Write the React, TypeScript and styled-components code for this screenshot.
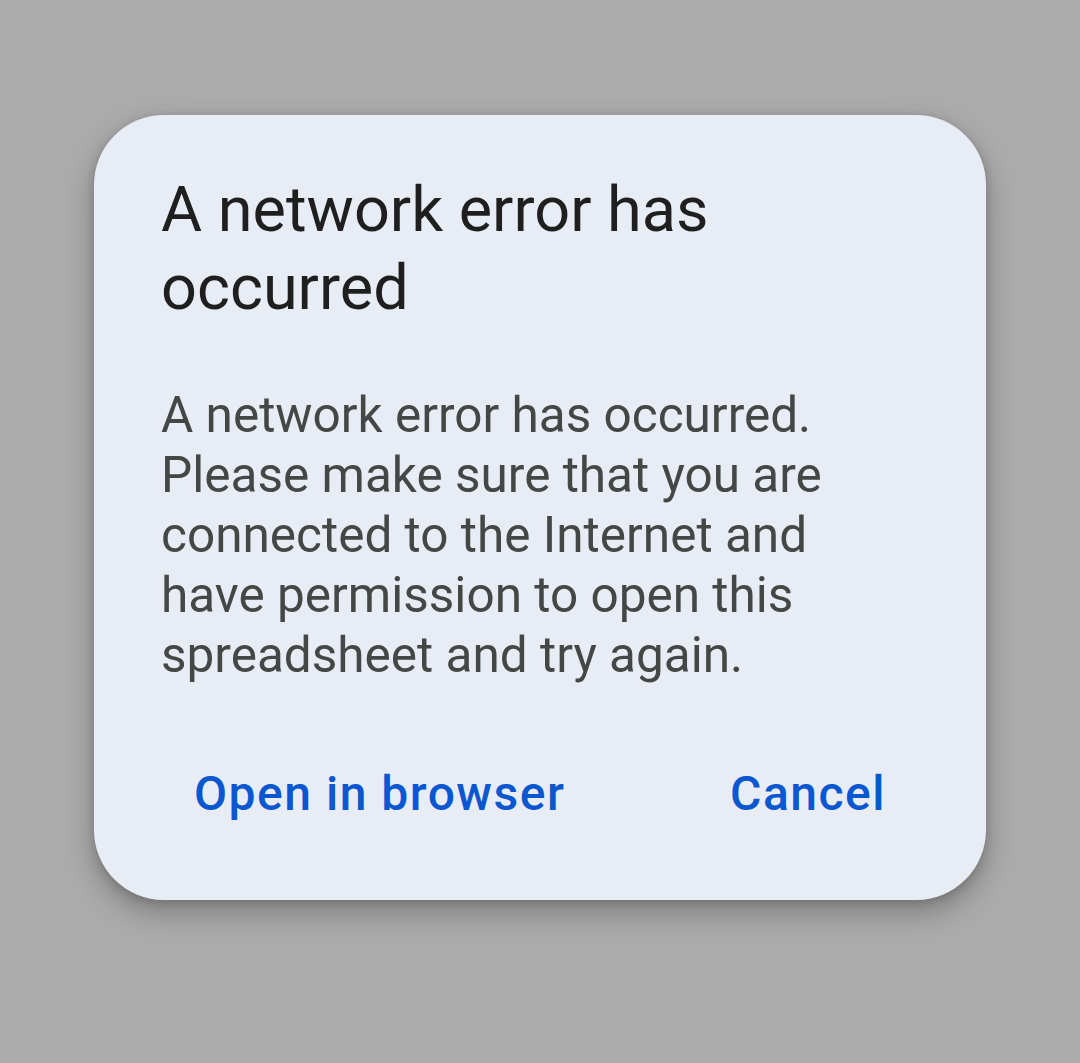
import React from "react";
import styled, { createGlobalStyle } from "styled-components";

const Global = createGlobalStyle`
  html, body { margin: 0; padding: 0; background: #ababab; }
  body { font-family: "Roboto", "Open Sans", sans-serif; }
`;

const Screen = styled.div`
  width: 1080px;
  height: 1063px;
  background: #ababab;
  display: flex;
  align-items: flex-start;
  justify-content: center;
  padding-top: 115px;
  box-sizing: border-box;
`;

const Dialog = styled.div`
  width: 892px;
  height: 785px;
  box-sizing: border-box;
  background: #e8edf5;
  border-radius: 70px;
  box-shadow: 0 12px 28px rgba(0, 0, 0, 0.28), 0 2px 8px rgba(0, 0, 0, 0.15);
  padding: 56px 64px 0 67px;
  display: flex;
  flex-direction: column;
`;

const Title = styled.h1`
  margin: 0;
  font-family: "Roboto", sans-serif;
  font-weight: 400;
  font-size: 63px;
  line-height: 78px;
  color: #1f1f1f;
`;

const Body = styled.p`
  margin: 58px 0 0;
  max-width: 680px;
  font-family: "Roboto", sans-serif;
  font-weight: 400;
  font-size: 49.5px;
  line-height: 60px;
  color: #444746;
`;

const Actions = styled.div`
  margin-top: 79px;
  display: flex;
  justify-content: space-between;
  padding: 0 36px 0 33px;
`;

const TextButton = styled.button`
  border: none;
  background: none;
  padding: 0;
  font-family: "Roboto", sans-serif;
  font-weight: 500;
  font-size: 48px;
  line-height: 60px;
  letter-spacing: 1.5px;
  color: #0b57d0;
  cursor: pointer;
`;

export default function App() {
  return (
    <>
      <Global />
      <Screen>
        <Dialog>
          <Title>
            A network error has
            <br />
            occurred
          </Title>
          <Body>
            A network error has occurred. Please make sure that you are connected to the
            Internet and have permission to open this spreadsheet and try again.
          </Body>
          <Actions>
            <TextButton>Open in browser</TextButton>
            <TextButton>Cancel</TextButton>
          </Actions>
        </Dialog>
      </Screen>
    </>
  );
}
